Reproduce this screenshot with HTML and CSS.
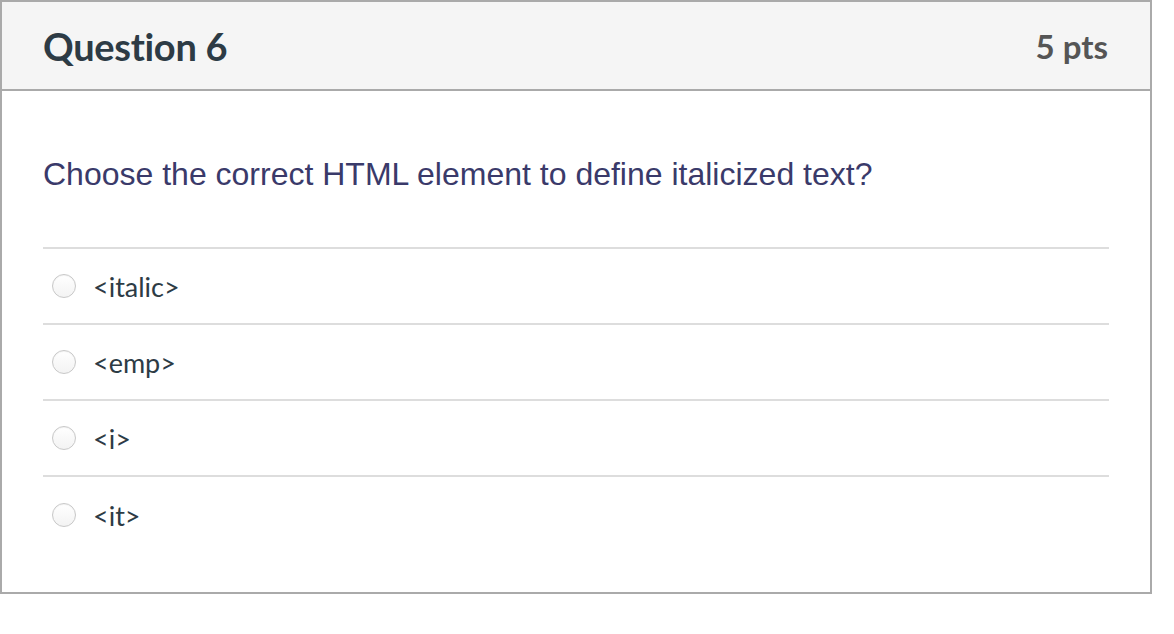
FILE: index.html
```html
<!DOCTYPE html>
<html>
<head>
<meta charset="utf-8">
<link rel="stylesheet" href="styles.css">
</head>
<body>
<div class="question">
  <div class="header">
    <h2 class="title">Question 6</h2>
    <div class="points">5 pts</div>
  </div>
  <div class="content">
    <div class="text">Choose the correct HTML element to define italicized text?</div>
    <div class="answers">
      <label class="answer"><span class="radio"></span><span class="label">&lt;italic&gt;</span></label>
      <label class="answer"><span class="radio"></span><span class="label">&lt;emp&gt;</span></label>
      <label class="answer"><span class="radio"></span><span class="label">&lt;i&gt;</span></label>
      <label class="answer"><span class="radio"></span><span class="label">&lt;it&gt;</span></label>
    </div>
  </div>
</div>
</body>
</html>
```
FILE: styles.css
```css
html, body {
  margin: 0;
  padding: 0;
  background: #fff;
}
.question {
  width: 1152px;
  box-sizing: border-box;
  border: 2px solid #aaaaaa;
  font-family: Lato, "Liberation Sans", sans-serif;
}
.header {
  display: flex;
  align-items: center;
  justify-content: space-between;
  height: 87px;
  background: #f5f5f5;
  border-bottom: 2px solid #aaaaaa;
  padding: 0 42px 0 41px;
}
.title {
  margin: 0;
  font-size: 38px;
  font-weight: 700;
  color: #2d3b45;
  letter-spacing: -0.3px;
}
.points {
  font-size: 33px;
  font-weight: 700;
  color: #555555;
}
.content {
  padding: 0 41px 39px 41px;
}
.text {
  font-family: "Liberation Sans", Arial, sans-serif;
  font-size: 32px;
  color: #3a3a6a;
  padding-top: 65px;
  line-height: 37px;
  padding-bottom: 54px;
  border-bottom: 2px solid #dddddd;
}
.answers {
  display: flex;
  flex-direction: column;
}
.answer {
  display: flex;
  align-items: center;
  height: 74px;
  border-bottom: 2px solid #dddddd;
  padding-left: 9px;
}
.answer:last-child {
  border-bottom: none;
  height: 76px;
}
.radio {
  width: 22px;
  height: 22px;
  border-radius: 50%;
  border: 1px solid #c8c8c8;
  background: linear-gradient(#ffffff, #f3f3f3);
  box-shadow: inset 0 1px 1px rgba(0,0,0,0.05);
  flex: none;
}
.label {
  margin-left: 17px;
  font-size: 27px;
  color: #2d3b45;
}
```
